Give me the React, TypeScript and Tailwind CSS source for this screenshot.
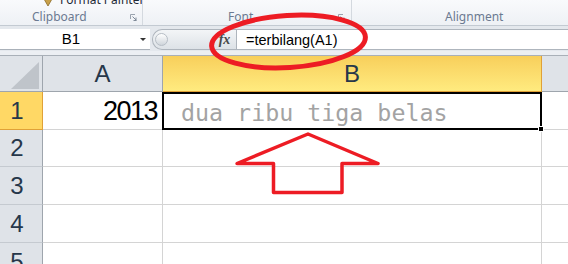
import React from "react";

function Launcher() {
  return (
    <svg width="7" height="7" viewBox="0 0 7 7" className="block">
      <path d="M0.5 5V0.5H5" stroke="#9aa3ae" fill="none" strokeWidth="1" />
      <path d="M2.5 2.5L6 6M6 3.5V6.5M3.5 6.5H6.5" stroke="#7f8a98" fill="none" strokeWidth="1" />
    </svg>
  );
}

const rows = [
  { n: "2", h: "h-[37px]" },
  { n: "3", h: "h-[38px]" },
  { n: "4", h: "h-[38px]" },
  { n: "5", h: "h-[38px]" },
];

export default function App() {
  return (
    <div className="relative w-[568px] h-[264px] overflow-hidden bg-white font-['Liberation_Sans',Arial,sans-serif]">
      {/* Ribbon */}
      <div className="flex h-[26px] border-b border-[#c3cad2] bg-gradient-to-b from-[#f9fafc] to-[#eef1f5] font-['Noto_Sans',sans-serif]">
        <div className="flex w-[143px] flex-col border-r border-[#d4d9df]">
          <div className="h-[9px] overflow-hidden">
            <div className="-mt-[7px] flex h-[14px] items-center gap-[7px] whitespace-nowrap pl-[43px]">
              <svg width="10" height="14" viewBox="0 0 10 14" className="block shrink-0">
                <path d="M1 6L5 2L9 6L5 13Z" fill="#c9a14a" stroke="#8a6a2a" strokeWidth="0.8" />
              </svg>
              <span className="whitespace-nowrap text-[12px] leading-[14px] text-[#1f2a36]">Format Painter</span>
            </div>
          </div>
          <div className="flex flex-1 items-center">
            <span className="ml-[32px] text-[12px] leading-[14px] text-[#6b7a91]">Clipboard</span>
            <span className="ml-auto mr-[5px]">
              <Launcher />
            </span>
          </div>
        </div>
        <div className="flex w-[209px] flex-col border-r border-[#d4d9df]">
          <div className="h-[9px]" />
          <div className="flex flex-1 items-center">
            <span className="ml-[85px] text-[12px] leading-[14px] text-[#6b7a91]">Font</span>
            <span className="ml-auto mr-[6px]">
              <Launcher />
            </span>
          </div>
        </div>
        <div className="flex flex-1 flex-col">
          <div className="h-[9px]" />
          <div className="flex flex-1 items-center">
            <span className="ml-[93px] text-[12px] leading-[14px] text-[#6b7a91]">Alignment</span>
          </div>
        </div>
      </div>

      {/* Formula bar */}
      <div className="flex h-[25px] bg-[#e4e8ed] pt-[3px]">
        <div className="flex h-[21px] w-[150px] items-center border-b border-[#aab1b9] bg-white">
          <span className="flex-1 pl-[2px] text-center text-[15px] leading-[18px] text-black">B1</span>
          <span className="mr-[4px] block h-0 w-0 border-x-[3px] border-t-[3px] border-x-transparent border-t-[#333]" />
        </div>
        <div className="ml-[2px] flex h-[21px] flex-1 items-center rounded-l-[10px] border border-r-0 border-[#aeb5bd] bg-gradient-to-b from-[#f3f5f7] to-[#dde2e7]">
          <span className="ml-[2px] block h-[13px] w-[13px] rounded-full border border-[#b6bdc5] bg-gradient-to-b from-[#ffffff] to-[#cfd5db]" />
          <span className="ml-auto flex w-[23px] items-center justify-center font-['Liberation_Serif',serif] text-[14px] font-bold italic leading-[16px] text-[#4a4a4a]">
            fx
          </span>
          <div className="flex h-full w-[332px] items-center border-l border-[#aeb5bd] bg-white pl-[9px] text-[14.5px] leading-[18px] text-black">
            =terbilang(A1)
          </div>
        </div>
      </div>
      <div className="h-[4px] bg-[#eceff3]" />

      {/* Column headers */}
      <div className="flex h-[37px] border-t border-[#a9b0b8]">
        <div className="flex w-[43px] items-end justify-end border-r border-b border-[#9ea5ad] bg-[#dfe3e8] pb-[2px] pr-[3px]">
          <svg width="28" height="27" viewBox="0 0 28 27" className="block">
            <polygon points="0,27 28,27 28,0" fill="#bfc4ca" />
          </svg>
        </div>
        <div className="flex w-[120px] items-center justify-center border-r border-b border-[#9ea5ad] bg-[#dfe3e8] text-[24px] leading-[28px] text-[#26374a]">
          A
        </div>
        <div className="flex w-[379px] items-center justify-center border-r border-b border-[#e0a137] bg-gradient-to-b from-[#f8cf5b] to-[#ffeb7f] text-[24px] leading-[28px] text-[#26374a]">
          B
        </div>
        <div className="flex-1 border-b border-[#9ea5ad] bg-[#dfe3e8]" />
      </div>

      {/* Row 1 */}
      <div className="flex h-[38px]">
        <div className="flex w-[43px] items-center justify-center border-r border-b border-[#e0a137] bg-[#ffd865] pr-[8px] text-[24px] leading-[28px] text-[#26374a]">
          1
        </div>
        <div className="flex w-[120px] items-center justify-end border-r border-b border-[#d4d4d4] pr-[5px] text-[27px] leading-[30px] tracking-[-1.5px] text-black">
          2013
        </div>
        <div className="relative flex w-[379px] items-center border-r border-b border-[#d4d4d4] pl-[18px] font-['DejaVu_Sans_Mono',monospace] text-[23.3px] leading-[27px] text-[#a3a3a3]">
          <span className="mt-[3px] whitespace-nowrap">dua ribu tiga belas</span>
          <div className="absolute -left-[1px] top-0 h-[38px] w-[380px] border-2 border-black">
            <div className="absolute -bottom-[4px] -right-[4px] h-[6px] w-[6px] border border-white bg-black" />
          </div>
        </div>
        <div className="flex-1 border-b border-[#d4d4d4]" />
      </div>

      {rows.map((r) => (
        <div key={r.n} className={`flex ${r.h}`}>
          <div className="flex w-[43px] items-center justify-center border-r border-b border-r-[#9ea5ad] border-b-[#c5cad0] bg-[#dfe3e8] pr-[8px] text-[24px] leading-[28px] text-[#26374a]">
            {r.n}
          </div>
          <div className="w-[120px] border-r border-b border-[#d4d4d4]" />
          <div className="w-[379px] border-r border-b border-[#d4d4d4]" />
          <div className="flex-1 border-b border-[#d4d4d4]" />
        </div>
      ))}

      {/* Annotations */}
      <svg className="pointer-events-none absolute left-0 top-0" width="568" height="264" viewBox="0 0 568 264">
        <ellipse cx="288.5" cy="41.5" rx="77" ry="26" transform="rotate(-3.5 288.5 41.5)" fill="none" stroke="#ed1c24" strokeWidth="5" />
        <polygon
          points="308,134 378,163.5 342,163.5 342,192.5 273.5,192.5 273.5,163.5 237,163.5"
          fill="none"
          stroke="#ed1c24"
          strokeWidth="3.5"
          strokeLinejoin="round"
        />
      </svg>
    </div>
  );
}
